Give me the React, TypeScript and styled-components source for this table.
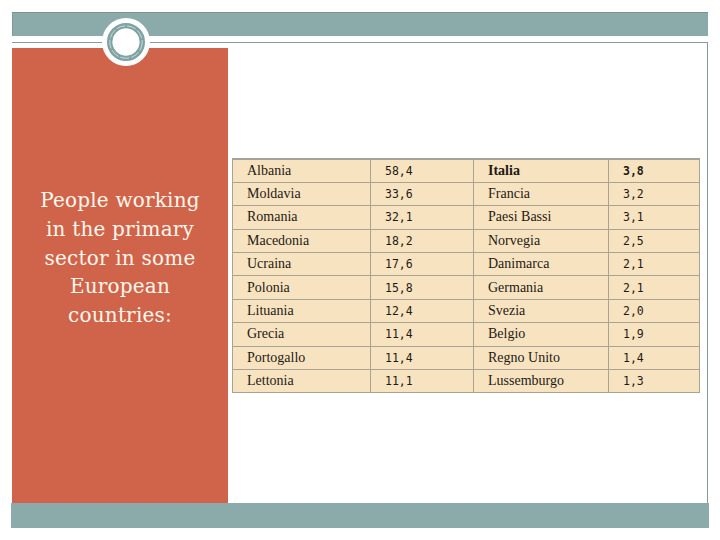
import React from "react";
import styled, { createGlobalStyle } from "styled-components";

const Global = createGlobalStyle`
  html, body { margin: 0; padding: 0; background: #ffffff; }
  body { width: 720px; height: 540px; overflow: hidden; }
`;

const Slide = styled.div`
  position: relative;
  width: 720px;
  height: 540px;
  box-sizing: border-box;
  padding: 12px 12px 0 12px;
  display: flex;
  flex-direction: column;
  background: #ffffff;
`;

const TopBand = styled.div`
  height: 24px;
  box-sizing: border-box;
  background: #8aabaa;
  border-top: 1px solid #7a9594;
  border-left: 1px solid #7f9a99;
`;

const Rule = styled.div`
  margin-top: 6px;
  height: 0;
  border-top: 1px solid #8c9c9c;
`;

const Body = styled.div`
  height: 460px;
  box-sizing: border-box;
  padding-top: 5px;
  display: flex;
  border-right: 1px solid #8c9595;
`;

const SidePanel = styled.div`
  width: 216px;
  flex: none;
  background: #d0644a;
  box-sizing: border-box;
  padding: 138px 22px 0 22px;
  color: #fdf7ec;
  font-family: "DejaVu Serif", "Liberation Serif", serif;
  font-size: 20px;
  line-height: 28.8px;
  text-align: center;
  letter-spacing: 0.2px;
`;

const Content = styled.div`
  flex: 1;
  padding: 110px 0 0 4px;
`;

const Table = styled.table`
  width: 467px;
  border-collapse: collapse;
  table-layout: fixed;
  background: #f8e3c0;
  border-top: 2px solid #a5a29b;
  border-left: 1px solid #a39c90;
  border-right: 1px solid #a39c90;
  border-bottom: 1px solid #a39c90;
`;

const Row = styled.tr`
  height: 23.4px;
`;

const Cell = styled.td<{ $num?: boolean; $bold?: boolean; $w: number }>`
  width: ${(p) => p.$w}px;
  box-sizing: border-box;
  padding: 0 0 0 14px;
  border: 1px solid #aba392;
  color: #1e1a16;
  font-family: ${(p) =>
    p.$num ? `"DejaVu Sans Mono", "Liberation Mono", monospace` : `"Liberation Serif", serif`};
  font-size: ${(p) => (p.$num ? "11.5px" : "14px")};
  font-weight: ${(p) => (p.$bold ? 700 : 400)};
  white-space: nowrap;
  vertical-align: middle;
`;

const BottomBand = styled.div`
  height: 25px;
  margin: 0 -1px;
  background: #8aabaa;
`;

const Badge = styled.div`
  position: absolute;
  left: 102px;
  top: 18px;
  width: 48px;
  height: 48px;
`;

const rows: [string, string, string, string][] = [
  ["Albania", "58,4", "Italia", "3,8"],
  ["Moldavia", "33,6", "Francia", "3,2"],
  ["Romania", "32,1", "Paesi Bassi", "3,1"],
  ["Macedonia", "18,2", "Norvegia", "2,5"],
  ["Ucraina", "17,6", "Danimarca", "2,1"],
  ["Polonia", "15,8", "Germania", "2,1"],
  ["Lituania", "12,4", "Svezia", "2,0"],
  ["Grecia", "11,4", "Belgio", "1,9"],
  ["Portogallo", "11,4", "Regno Unito", "1,4"],
  ["Lettonia", "11,1", "Lussemburgo", "1,3"],
];

export default function App() {
  return (
    <>
      <Global />
      <Slide>
        <TopBand />
        <Rule />
        <Body>
          <SidePanel>
            People working in the primary sector in some European countries:
          </SidePanel>
          <Content>
            <Table>
              <tbody>
                {rows.map((r, i) => (
                  <Row key={i}>
                    <Cell $w={138}>{r[0]}</Cell>
                    <Cell $w={103} $num>{r[1]}</Cell>
                    <Cell $w={135} $bold={i === 0}>{r[2]}</Cell>
                    <Cell $w={91} $num $bold={i === 0}>{r[3]}</Cell>
                  </Row>
                ))}
              </tbody>
            </Table>
          </Content>
        </Body>
        <BottomBand />
        <Badge>
          <svg width="48" height="48" viewBox="0 0 48 48">
            <circle cx="24" cy="24" r="24" fill="#ffffff" />
            <circle cx="24" cy="24" r="16.2" fill="none" stroke="#7fa3a2" strokeWidth="5.6" />
            <circle
              cx="24"
              cy="24"
              r="16.2"
              fill="none"
              stroke="#e8f0f0"
              strokeWidth="0.7"
              strokeDasharray="9 2"
            />
            <circle cx="24" cy="24" r="13.4" fill="#ffffff" />
          </svg>
        </Badge>
      </Slide>
    </>
  );
}
